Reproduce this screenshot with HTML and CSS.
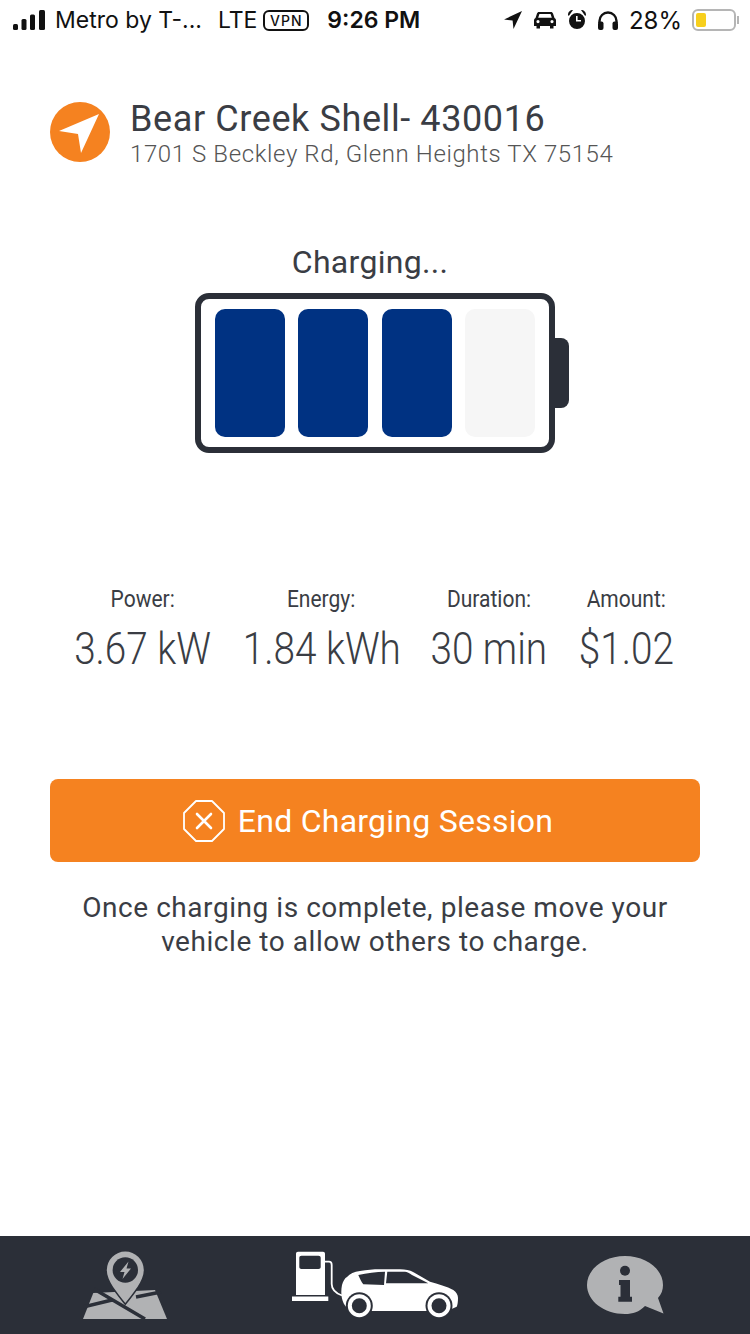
FILE: index.html
```html
<!DOCTYPE html>
<html lang="en">

<head>
    <meta charset="UTF-8">
    <meta name="viewport" content="width=device-width, initial-scale=1.0">
    <title>Charging</title>
    <link rel="stylesheet" href="styles.css">
</head>

<body>
    <div class="status-bar">
        <div class="status-group">
            <svg class="signal" width="33" height="22" viewBox="0 0 33 22">
                <rect x="0" y="15" width="5" height="6" rx="1.5" />
                <rect x="8.500" y="10" width="5" height="11" rx="1.5" />
                <rect x="17" y="5.500" width="5" height="15.500" rx="1.5" />
                <rect x="26" y="1" width="6" height="20" rx="1.5" />
            </svg>
            <span class="carrier">Metro by T-...</span>
            <span class="network">LTE</span>
            <span class="vpn">VPN</span>
            <span class="clock">9:26 PM</span>
        </div>
        <div class="status-group">
            <svg class="status-icon" width="18" height="18" viewBox="0 0 18 18">
                <path d="M18 0 L0 8.500 L8.600 9.400 L9.500 18 Z" />
            </svg>
            <svg class="status-icon" width="22" height="18" viewBox="0 0 22 18">
                <path fill-rule="evenodd" d="M5 1 H17 C18 1 18.700 1.600 19 2.500 L20.500 7 C21.500 7.600 22 8.400 22 9.500 V15 H19.500 V17.500 H16 V15 H6 V17.500 H2.500 V15 H0 V9.500 C0 8.400 .5 7.600 1.500 7 L3 2.500 C3.300 1.600 4 1 5 1 Z M5.400 3 L4.200 6.800 H17.800 L16.600 3 Z M4 9 A1.600 1.600 0 1 0 4 12.200 A1.600 1.600 0 1 0 4 9 Z M18 9 A1.600 1.600 0 1 0 18 12.200 A1.600 1.600 0 1 0 18 9 Z" />
            </svg>
            <svg class="status-icon" width="18" height="20" viewBox="0 0 18 20">
                <path fill-rule="evenodd" d="M9 3 A8 8 0 1 1 9 19 A8 8 0 1 1 9 3 Z M8 6 V11.500 H13 V10 H9.600 V6 Z" />
                <path d="M0 5 C0 2 2 0 5 0 L0.800 6 Z M18 5 C18 2 16 0 13 0 L17.200 6 Z" />
            </svg>
            <svg class="status-icon" width="20" height="19" viewBox="0 0 20 19">
                <path d="M1.500 12 V10 A8.500 8.500 0 0 1 18.500 10 V12" fill="none" stroke="#111" stroke-width="2.400" />
                <rect x="0" y="10.500" width="5.500" height="8.500" rx="2" />
                <rect x="14.500" y="10.500" width="5.500" height="8.500" rx="2" />
            </svg>
            <span class="percent">28%</span>
            <div class="phone-battery">
                <div class="phone-battery-fill"></div>
            </div>
        </div>
    </div>

    <div class="station">
        <svg class="station-logo" width="60" height="60" viewBox="0 0 60 60">
            <circle cx="30" cy="30" r="30" fill="#f58220" />
            <path d="M49 12 L9 29 L28 32 L31 51 Z" fill="#fff" />
        </svg>
        <div class="station-info">
            <div class="station-name">Bear Creek Shell- 430016</div>
            <div class="station-address">1701 S Beckley Rd, Glenn Heights TX 75154</div>
        </div>
    </div>

    <div class="charging-label">Charging...</div>

    <div class="battery">
        <div class="battery-body">
            <div class="cell full"></div>
            <div class="cell full"></div>
            <div class="cell full"></div>
            <div class="cell"></div>
        </div>
        <div class="battery-nub"></div>
    </div>

    <div class="stats">
        <div class="stat">
            <span class="stat-label">Power:</span>
            <span class="stat-value">3.67 kW</span>
        </div>
        <div class="stat">
            <span class="stat-label">Energy:</span>
            <span class="stat-value">1.84 kWh</span>
        </div>
        <div class="stat">
            <span class="stat-label">Duration:</span>
            <span class="stat-value">30 min</span>
        </div>
        <div class="stat">
            <span class="stat-label">Amount:</span>
            <span class="stat-value">$1.02</span>
        </div>
    </div>

    <button class="end-button">
        <svg width="42" height="42" viewBox="0 0 42 42" fill="none" stroke="#fff">
            <path d="M13 1 H29 L41 13 V29 L29 41 H13 L1 29 V13 Z" stroke-width="1.800" stroke-linejoin="round" />
            <path d="M14 14 L28 28 M28 14 L14 28" stroke-width="2.600" stroke-linecap="round" />
        </svg>
        End Charging Session
    </button>

    <p class="note">Once charging is complete, please move your<br>vehicle to allow others to charge.</p>

    <nav class="tab-bar">
        <svg class="tab-map" width="84" height="68" viewBox="0 0 84 68">
            <path d="M10.300 42 L72 39 L84 68 H0 Z" fill="#b1b2b4" />
            <path d="M11 38 L62 68 M0 56 L29 49 M53 46 L78 41" fill="none" stroke="#2b2f38" stroke-width="3.500" />
            <path d="M42.300 .5 A18.500 18.500 0 0 1 60.800 19 C60.800 30 50 42 42.300 52 C34.600 42 23.800 30 23.800 19 A18.500 18.500 0 0 1 42.300 .5 Z" fill="#b1b2b4" stroke="#2b2f38" stroke-width="3" paint-order="stroke" />
            <circle cx="42.300" cy="19" r="12.700" fill="#2b2f38" />
            <path d="M45.500 10.500 L37 21 H41.500 L39.500 28 L48 17.500 H43.500 Z" fill="#b1b2b4" />
        </svg>
        <svg class="tab-car" width="166" height="68" viewBox="0 0 166 68">
            <path fill-rule="evenodd" fill="#fff" d="M6 .7 H31 C32.200 .7 33 1.500 33 2.700 V44 H4 V2.700 C4 1.500 4.800 .7 6 .7 Z M9.500 4.700 C8.200 4.700 7.300 5.500 7.300 6.700 V16 C7.300 17.200 8.200 18 9.500 18 H26.500 C27.800 18 28.700 17.200 28.700 16 V6.700 C28.700 5.500 27.800 4.700 26.500 4.700 Z" />
            <rect x="0" y="45.500" width="36.300" height="4.500" fill="#fff" />
            <path d="M33 10.700 H37 C39 10.700 39.700 12 39.700 14 V33 C39.700 39 43 42 50 44.500" fill="none" stroke="#fff" stroke-width="1.800" />
            <!-- body, windows cut out, wheels laid over it -->
            <path fill-rule="evenodd" fill="#fff" d="M50 34 C51 30 53 27 55 26 C58 23 62 20.500 68 20 C75 18.800 81 18.300 88 18.300 H108 C114 18.300 118.500 19.300 122 21.500 L138 30.700 C146 33 155 35.500 161.300 39 C164.500 41 166 44 166 47 C166 51 165.500 54 164.700 55.700 L155 60 H60 C50 56 48 44 50 34 Z M66.300 24 C68 28 69.500 31 71.300 33.300 L92 34 L93 20.700 C84 21 75 22 66.300 24 Z M95.300 20.700 L94 32.300 H136.300 L120 24 C117.500 22 115 20.700 113 20.700 Z" />
            <circle cx="67.300" cy="54.700" r="13.500" fill="#2b2f38" />
            <circle cx="67.300" cy="54.700" r="11.500" fill="#fff" />
            <circle cx="67.300" cy="54.700" r="7.500" fill="#2b2f38" />
            <circle cx="147" cy="54.700" r="13.500" fill="#2b2f38" />
            <circle cx="147" cy="54.700" r="11.500" fill="#fff" />
            <circle cx="147" cy="54.700" r="7.500" fill="#2b2f38" />
        </svg>
        <svg class="tab-info" width="77" height="58" viewBox="0 0 77 58">
            <path d="M38 0 C59 0 76 13 76 29 C76 34 74.500 38 71 42 L76.500 57.500 L58 50 C52 56 46 58 38 58 C17 58 0 45 0 29 C0 13 17 0 38 0 Z" fill="#b1b2b4" />
            <circle cx="38" cy="14.700" r="5" fill="#2b2f38" />
            <path d="M32 24 H43 V40.700 H45 V45.700 H31.300 V40.700 H33.500 V29 H32 Z" fill="#2b2f38" />
        </svg>
    </nav>
</body>

</html>
```

FILE: styles.css
```css
body {
    font-family: "Roboto", "Liberation Sans", sans-serif;
    margin: 0;
    padding: 0;
    width: 750px;
    height: 1334px;
    background: #fff;
    color: #3a3d44;
    overflow: hidden;
    display: flex;
    flex-direction: column;
}

/* status bar */
.status-bar {
    height: 40px;
    padding: 0 14px 0 13px;
    display: flex;
    justify-content: space-between;
    align-items: center;
    font-family: "Inter", "Liberation Sans", sans-serif;
    font-size: 23px;
    color: #111;
}

.status-group {
    display: flex;
    align-items: center;
}

.signal {
    fill: #111;
    margin-right: 9px;
}

.carrier {
    margin-right: 16px;
}

.network {
    margin-right: 6px;
}

.vpn {
    width: 46px;
    height: 21px;
    box-sizing: border-box;
    border: 2px solid #111;
    border-radius: 6px;
    font-size: 14px;
    font-weight: 500;
    letter-spacing: 1px;
    display: flex;
    align-items: center;
    justify-content: center;
    margin-right: 18px;
}

.clock {
    font-weight: 600;
}

.status-icon {
    fill: #111;
    margin-right: 12px;
}

.percent {
    font-size: 24px;
    margin: 0 10px 0 -1px;
}

.phone-battery {
    width: 44px;
    height: 22px;
    box-sizing: border-box;
    border: 2px solid #b5b5b5;
    border-radius: 6px;
    padding: 2px;
    position: relative;
}

.phone-battery::after {
    content: "";
    position: absolute;
    right: -5px;
    top: 5px;
    width: 2px;
    height: 8px;
    background: #b5b5b5;
}

.phone-battery-fill {
    width: 10px;
    height: 100%;
    background: #f7cf1d;
    border-radius: 2px;
}

/* station header */
.station {
    display: flex;
    gap: 20px;
    margin: 62px 0 0 50px;
}

.station-info {
    margin-top: -2px;
}

.station-name {
    font-size: 36px;
    line-height: 38px;
    letter-spacing: 0.6px;
}

.station-address {
    margin-top: 2px;
    font-size: 24px;
    font-weight: 300;
    line-height: 28px;
    color: #555;
    letter-spacing: 0.6px;
}

.charging-label {
    margin-top: 74px;
    padding-right: 10px;
    text-align: center;
    font-size: 32px;
    line-height: 40px;
    letter-spacing: 0.3px;
}

/* big battery */
.battery {
    display: flex;
    align-items: center;
    margin: 11px 0 0 195px;
}

.battery-body {
    width: 360px;
    height: 160px;
    box-sizing: border-box;
    border: 6px solid #2b2f38;
    border-radius: 14px;
    padding: 10px 14px;
    display: flex;
    justify-content: space-between;
}

.cell {
    width: 70px;
    background: #f6f6f6;
    border-radius: 10px;
}

.cell.full {
    background: #003282;
}

.battery-nub {
    width: 14px;
    height: 70px;
    background: #2b2f38;
    border-radius: 0 8px 8px 0;
}

/* session numbers */
.stats {
    display: grid;
    grid-template-columns: 136px 155px 114px 94px;
    gap: 33px;
    margin: 130px 0 0 75px;
}

.stat {
    display: flex;
    flex-direction: column;
    align-items: center;
    white-space: nowrap;
}

.stat-label {
    font-size: 24px;
    line-height: 32px;
    transform: scaleX(0.875);
}

.stat-value {
    font-size: 45px;
    font-weight: 300;
    line-height: 68px;
    transform: scaleX(0.86);
}

.end-button {
    width: 650px;
    height: 83px;
    margin: 96px 0 0 50px;
    padding: 0 14px 0 0;
    border: none;
    border-radius: 8px;
    background: #f58220;
    color: #fff;
    font-family: inherit;
    font-size: 32px;
    letter-spacing: 0.25px;
    display: flex;
    align-items: center;
    justify-content: center;
    gap: 13px;
}

.note {
    margin: 29px 0 0;
    text-align: center;
    font-size: 28px;
    line-height: 34px;
    letter-spacing: 0.55px;
}

/* bottom tabs */
.tab-bar {
    margin-top: auto;
    height: 98px;
    flex-shrink: 0;
    background: #2b2f38;
    box-sizing: border-box;
    padding-left: 83px;
    display: flex;
    align-items: center;
}

.tab-car {
    margin-left: 125px;
}

.tab-info {
    margin-left: 129px;
}
```
